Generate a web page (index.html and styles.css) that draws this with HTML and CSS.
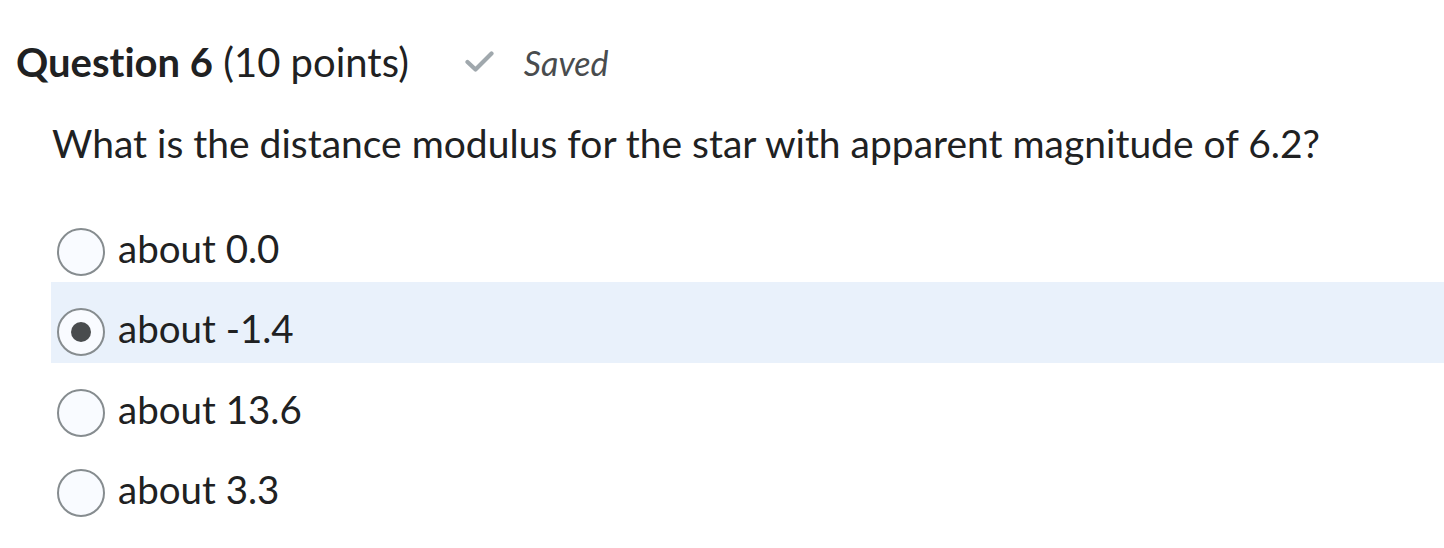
FILE: index.html
```html
<!DOCTYPE html>
<html lang="en">
<head>
<meta charset="utf-8">
<title>Question 6</title>
<link rel="stylesheet" href="styles.css">
</head>
<body>
<div class="question">
  <div class="q-header">
    <h2 class="q-title"><strong>Question 6</strong> (10 points)</h2>
    <span class="q-status">
      <svg class="check" viewBox="0 0 29 21" width="29" height="21" aria-hidden="true">
        <path d="M2.5 11 L10.5 18.5 L26.5 2.5" fill="none" stroke="#a0a8ad" stroke-width="4.2" stroke-linecap="round" stroke-linejoin="round"/>
      </svg>
      <em>Saved</em>
    </span>
  </div>
  <p class="q-text">What is the distance modulus for the star with apparent magnitude of 6.2?</p>
  <div class="options">
    <label class="option"><span class="radio"></span><span class="opt-text">about 0.0</span></label>
    <label class="option selected"><span class="radio checked"></span><span class="opt-text">about -1.4</span></label>
    <label class="option"><span class="radio"></span><span class="opt-text">about 13.6</span></label>
    <label class="option"><span class="radio"></span><span class="opt-text">about 3.3</span></label>
  </div>
</div>
</body>
</html>
```
FILE: styles.css
```css
html, body {
  margin: 0;
  padding: 0;
  background: #ffffff;
}
body {
  font-family: Lato, "Noto Sans", "Liberation Sans", sans-serif;
  color: #202122;
  font-variant-ligatures: none;
}
.question {
  padding-top: 39px;
}
.q-header {
  display: flex;
  align-items: center;
  padding-left: 16px;
  height: 46px;
}
.q-title {
  margin: 0;
  font-size: 40px;
  font-weight: 400;
  line-height: 46px;
}
.q-title strong {
  font-weight: 700;
}
.q-status {
  display: flex;
  align-items: center;
  margin-left: 56px;
  color: #494c4e;
  font-size: 34px;
}
.check {
  display: block;
  margin-right: 30px;
  margin-top: -2px;
}
.q-status em {
  font-style: italic;
}
.q-text {
  margin: 35px 0 0 52px;
  font-size: 39px;
  line-height: 46px;
}
.options {
  margin-top: 36px;
  margin-left: 51px;
}
.option {
  display: flex;
  align-items: flex-start;
  height: 80px;
  box-sizing: border-box;
  padding: 23px 0 0 6px;
}
.option.selected {
  background: #e9f1fb;
  height: 81px;
}
.radio {
  width: 48px;
  height: 48px;
  margin-top: 3px;
  box-sizing: border-box;
  border: 2px solid #868c8f;
  border-radius: 50%;
  background: #f9fbff;
  flex: none;
  display: flex;
  align-items: center;
  justify-content: center;
}
.radio.checked::after {
  content: "";
  width: 20px;
  height: 20px;
  border-radius: 50%;
  background: #494c4e;
}
.opt-text {
  margin-left: 13px;
  font-size: 38.5px;
  line-height: 46px;
}
```
